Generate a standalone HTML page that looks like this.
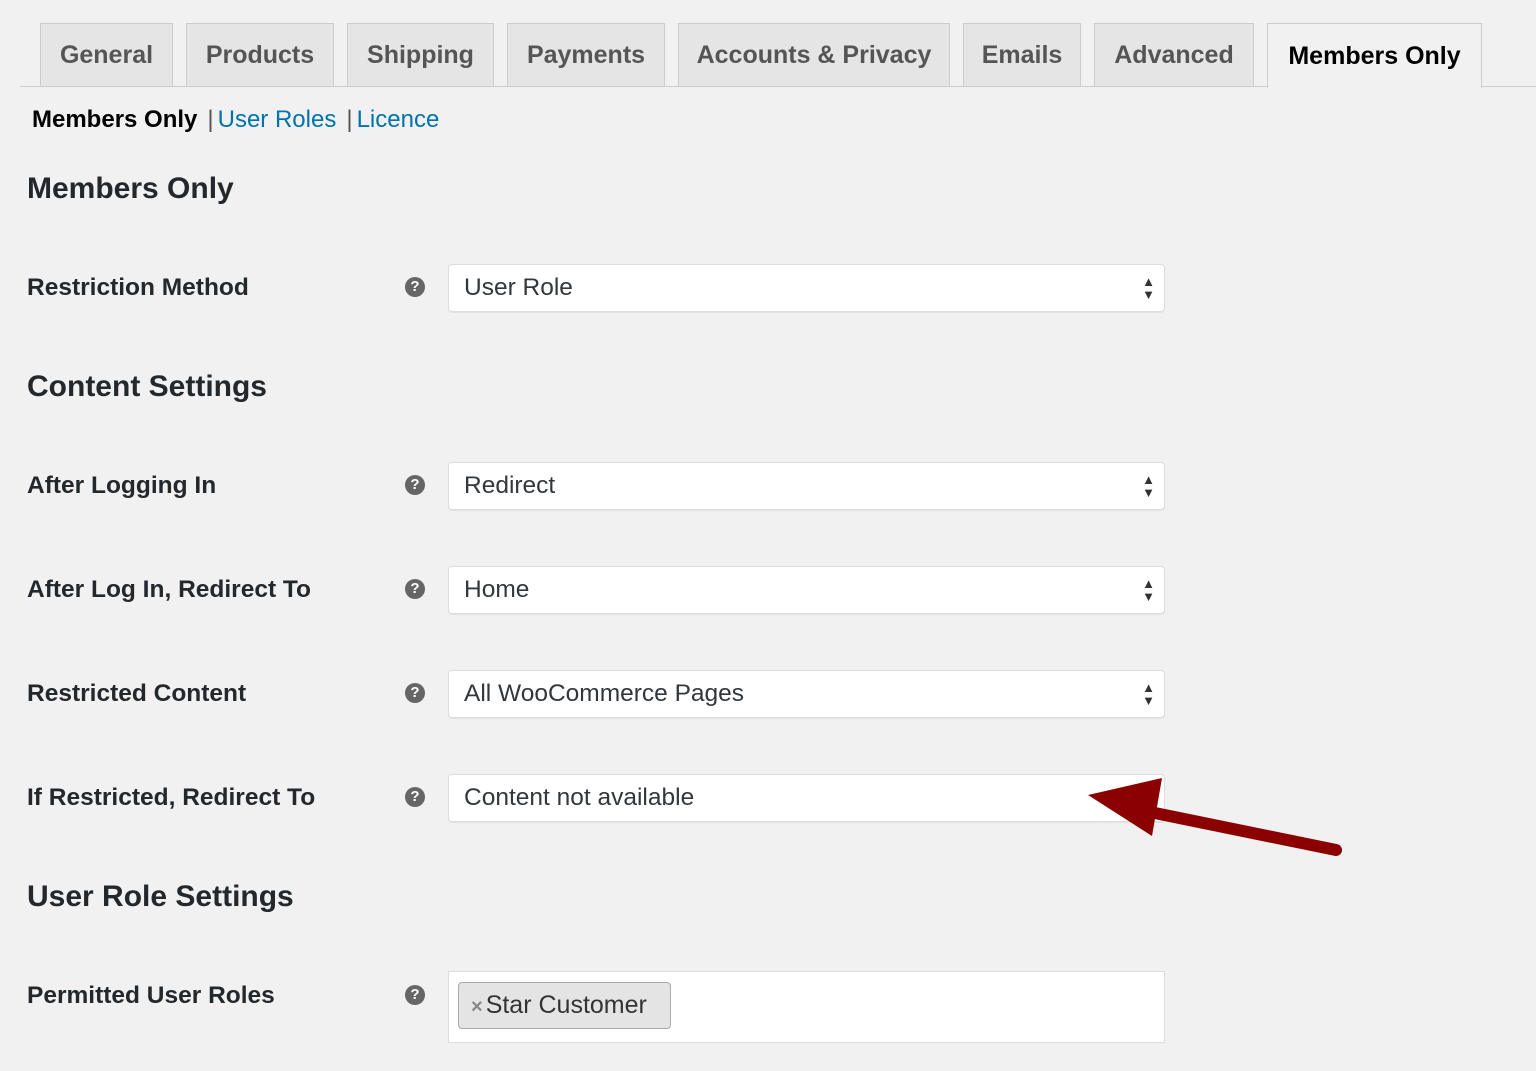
<!DOCTYPE html>
<html><head><style>
body{margin:0;width:1536px;height:1071px;background:#f1f1f1;font-family:"Liberation Sans",sans-serif;position:relative;overflow:hidden;color:#23282d}
.tab{position:absolute;top:23px;height:63px;background:#e5e5e5;border:1px solid #ccc;border-bottom:none;box-sizing:border-box;font-size:25px;color:#555;font-weight:bold;display:flex;align-items:center;justify-content:center}
.tab.a{background:#f1f1f1;color:#000;height:65px}
.line{position:absolute;top:86px;left:20px;right:0;height:1px;background:#ccc}
.sub{position:absolute;top:106px;left:32px;font-size:24px;color:#000}
.sub a{color:#0073aa;text-decoration:none}
.sub .s{color:#555;margin:0 4px 0 10px}
h2{position:absolute;left:27px;margin:0;font-size:30px;font-weight:bold;color:#23282d}
.lbl{position:absolute;left:27px;font-size:24.5px;font-weight:bold;color:#23282d}
.q{position:absolute;left:405px;width:20px;height:20px;border-radius:50%;background:#666;color:#fff;font-size:15px;font-weight:bold;text-align:center;line-height:20px}
.sel{position:absolute;left:448px;width:717px;height:48px;background:#fff;border:1px solid #ddd;border-radius:4px;box-sizing:border-box;box-shadow:0 1px 1px rgba(0,0,0,.06);font-size:24.5px;color:#32373c;padding-left:15px;line-height:46px}
.ar{position:absolute;right:9px;top:10px;font-size:13px;line-height:13px;color:#333}
</style></head><body>
<div class="line"></div>
<div class="tab" style="left:40px;width:133px">General</div>
<div class="tab" style="left:186px;width:148px">Products</div>
<div class="tab" style="left:347px;width:147px">Shipping</div>
<div class="tab" style="left:507px;width:158px">Payments</div>
<div class="tab" style="left:678px;width:272px">Accounts &amp; Privacy</div>
<div class="tab" style="left:963px;width:118px">Emails</div>
<div class="tab" style="left:1094px;width:160px">Advanced</div>
<div class="tab a" style="left:1267px;width:215px">Members Only</div>
<div class="sub"><b style="font-weight:bold">Members Only</b><span class="s">|</span><a>User Roles</a><span class="s">|</span><a>Licence</a></div>
<h2 style="top:172px">Members Only</h2>
<div class="lbl" style="top:274px">Restriction Method</div><div class="q" style="top:277px">?</div>
<div class="sel" style="top:264px">User Role<div class="ar">▲<br>▼</div></div>
<h2 style="top:370px">Content Settings</h2>
<div class="lbl" style="top:472px">After Logging In</div><div class="q" style="top:475px">?</div>
<div class="sel" style="top:462px">Redirect<div class="ar">▲<br>▼</div></div>
<div class="lbl" style="top:576px">After Log In, Redirect To</div><div class="q" style="top:579px">?</div>
<div class="sel" style="top:566px">Home<div class="ar">▲<br>▼</div></div>
<div class="lbl" style="top:680px">Restricted Content</div><div class="q" style="top:683px">?</div>
<div class="sel" style="top:670px">All WooCommerce Pages<div class="ar">▲<br>▼</div></div>
<div class="lbl" style="top:784px">If Restricted, Redirect To</div><div class="q" style="top:787px">?</div>
<div class="sel" style="top:774px">Content not available</div>
<h2 style="top:880px">User Role Settings</h2>
<div class="lbl" style="top:982px">Permitted User Roles</div><div class="q" style="top:985px">?</div>
<div style="position:absolute;left:448px;top:971px;width:717px;height:72px;background:#fff;border:1px solid #ddd;box-sizing:border-box"></div>
<div style="position:absolute;left:458px;top:982px;width:213px;height:47px;background:#e4e4e4;border:1px solid #aaa;border-radius:4px;box-sizing:border-box;font-size:25px;color:#333;line-height:45px;padding-left:12px"><span style="color:#888;font-size:20px;font-weight:bold;margin-right:3px">×</span>Star Customer</div>
<svg style="position:absolute;left:0;top:0" width="1536" height="1071">
<line x1="1150" y1="812" x2="1336" y2="850" stroke="#8b0000" stroke-width="12" stroke-linecap="round"/>
<polygon points="1088,795 1162,778 1152,836" fill="#8b0000"/>
</svg>
</body></html>
